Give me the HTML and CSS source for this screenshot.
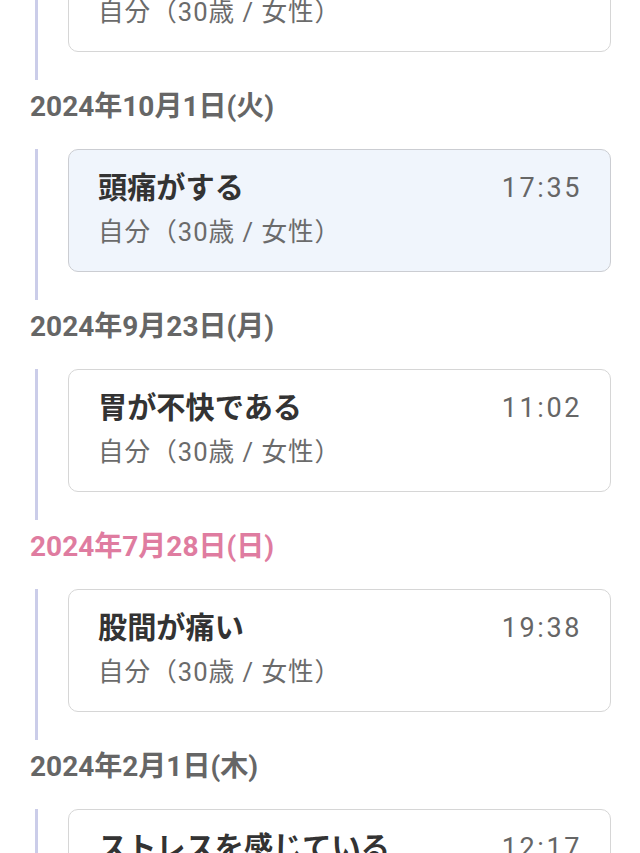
FILE: index.html
```html
<!DOCTYPE html>
<html lang="ja">
<head>
<meta charset="utf-8">
<link rel="stylesheet" href="styles.css">
</head>
<body>
<div class="timeline">
  <div class="entries first">
    <div class="card">
      <div class="card-main">
        <div class="title">体がだるい</div>
        <div class="sub">自分（30歳 / 女性）</div>
      </div>
      <div class="time">08:12</div>
    </div>
  </div>

  <h2 class="date">2024年10月1日(火)</h2>
  <div class="entries">
    <div class="card active">
      <div class="card-main">
        <div class="title">頭痛がする</div>
        <div class="sub">自分（30歳 / 女性）</div>
      </div>
      <div class="time">17:35</div>
    </div>
  </div>

  <h2 class="date">2024年9月23日(月)</h2>
  <div class="entries">
    <div class="card">
      <div class="card-main">
        <div class="title">胃が不快である</div>
        <div class="sub">自分（30歳 / 女性）</div>
      </div>
      <div class="time">11:02</div>
    </div>
  </div>

  <h2 class="date sunday">2024年7月28日(日)</h2>
  <div class="entries">
    <div class="card">
      <div class="card-main">
        <div class="title">股間が痛い</div>
        <div class="sub">自分（30歳 / 女性）</div>
      </div>
      <div class="time">19:38</div>
    </div>
  </div>

  <h2 class="date">2024年2月1日(木)</h2>
  <div class="entries">
    <div class="card">
      <div class="card-main">
        <div class="title">ストレスを感じている</div>
        <div class="sub">自分（30歳 / 女性）</div>
      </div>
      <div class="time">12:17</div>
    </div>
  </div>
</div>
</body>
</html>
```

FILE: styles.css
```css
html, body {
  margin: 0;
  padding: 0;
  background: #ffffff;
  overflow: hidden;
}
body {
  font-family: Roboto, "Noto Sans CJK JP", sans-serif;
  color: #333333;
}
.timeline {
  display: flex;
  flex-direction: column;
}
.entries {
  margin-left: 35px;
  border-left: 3px solid #cbcde9;
  padding: 0 29px 28px 30px;
}
.entries.first {
  margin-top: -71px;
}
.date {
  margin: 7px 0 22px 0;
  padding-left: 30px;
  font-size: 28px;
  line-height: 40px;
  font-weight: 700;
  color: #666666;
}
.date.sunday {
  color: #df7ca0;
}
.card {
  display: flex;
  justify-content: space-between;
  align-items: flex-start;
  border: 1px solid #d6d6d6;
  border-radius: 10px;
  background: #ffffff;
  padding: 18px 28px 22px 29px;
}
.card.active {
  background: #f0f5fc;
  border-color: #cbcdd2;
}
.card-main {
  display: flex;
  flex-direction: column;
  gap: 7px;
}
.title {
  font-size: 29.2px;
  line-height: 40px;
  font-weight: 700;
  color: #333333;
}
.sub {
  font-size: 25.6px;
  line-height: 34px;
  letter-spacing: 1px;
  color: #6b6b6b;
}
.time {
  font-size: 27px;
  line-height: 40px;
  letter-spacing: 2.6px;
  color: #666666;
}
```
